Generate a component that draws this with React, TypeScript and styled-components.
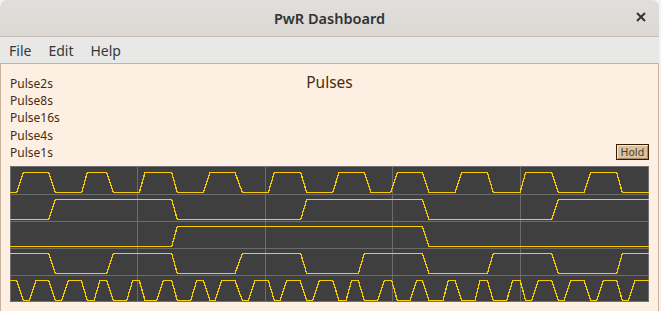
import React from 'react'
import styled, { createGlobalStyle } from 'styled-components'

const GlobalStyle = createGlobalStyle`
  html, body {
    margin: 0;
    padding: 0;
    background: #f4f3f2;
    font-family: "Noto Sans", "DejaVu Sans", sans-serif;
  }
`

const Window = styled.div`
  width: 659px;
  height: 311px;
  display: flex;
  flex-direction: column;
  overflow: hidden;
`

const TitleBar = styled.div`
  height: 36px;
  flex: none;
  display: flex;
  align-items: center;
  justify-content: center;
  position: relative;
  background: linear-gradient(#e1dedb, #dcd8d4);
  border-bottom: 1px solid #c4bdb5;
  border-top-left-radius: 7px;
  border-top-right-radius: 7px;
  color: #2e3436;
  font-size: 14.5px;
  font-weight: 600;
`

const CloseButton = styled.span`
  position: absolute;
  right: 10px;
  top: 9px;
  width: 16px;
  height: 16px;
  display: flex;
  align-items: center;
  justify-content: center;
`

const MenuBar = styled.div`
  height: 26px;
  flex: none;
  display: flex;
  align-items: center;
  gap: 17px;
  padding-left: 9px;
  background: #e8e8e7;
  font-size: 14px;
  color: #33383a;
`

const MenuItem = styled.span``

const Content = styled.div`
  flex: 1;
  display: flex;
  flex-direction: column;
  gap: 5px;
  background: #fdf0e3;
  border-top: 1px solid #c8b29c;
  border-left: 1px solid #c8b29c;
  border-right: 1px solid #c8b29c;
  padding: 11px 9px 0 9px;
`

const Header = styled.div`
  display: grid;
  grid-template-columns: 1fr auto 1fr;
  align-items: start;
`

const Labels = styled.div`
  display: flex;
  flex-direction: column;
`

const Label = styled.div`
  font-size: 12px;
  line-height: 17.2px;
  color: #4a2a14;
`

const Title = styled.div`
  font-size: 15.5px;
  line-height: 14px;
  color: #4a2a14;
`

const HoldCell = styled.div`
  display: flex;
  justify-content: flex-end;
  align-self: end;
  padding-bottom: 1px;
`

const HoldButton = styled.button`
  width: 33px;
  height: 16px;
  padding: 0;
  margin: 0;
  border: 1px solid #3e1a00;
  background: #d6c5a3;
  box-shadow: inset 1px 1px 0 #f2e8d2, inset -1px -1px 0 #a48c6a;
  font-family: "DejaVu Sans", sans-serif;
  font-size: 10.5px;
  color: #5a3a20;
  line-height: 12px;
`

const Chart = styled.svg`
  display: block;
  flex: none;
`

const LEFT = 10
const RIGHT = 648.5
const TOP = 166
const ROW = 27

type Signal = { name: string; high: boolean; edges: number[][] }

const signals: Signal[] = [
  {
    name: 'Pulse2s',
    high: false,
    edges: [[16.7, 23.3], [48.7, 55.3], [81.7, 87.3], [106.7, 113.3], [139.3, 145], [171.7, 177.3], [203.3, 210], [235, 242.3], [268.3, 274.3], [300.7, 306.7], [332.7, 339], [364.3, 371], [390.7, 397.3], [422.3, 429], [455, 461.7], [487.3, 493.3], [520, 525.7], [551.7, 558.3], [584, 590.7], [616.7, 622.3]],
  },
  {
    name: 'Pulse8s',
    high: false,
    edges: [[48.7, 55.3], [171.7, 177.3], [300.7, 306.7], [422.3, 429], [551.7, 558.3]],
  },
  {
    name: 'Pulse16s',
    high: false,
    edges: [[171.7, 177.3], [422.3, 429]],
  },
  {
    name: 'Pulse4s',
    high: true,
    edges: [[48.7, 55.3], [106.7, 113.3], [171.7, 177.3], [235, 242.3], [300.7, 306.7], [358.3, 364.3], [422.3, 429], [487.3, 493.3], [551.7, 558.3], [616.7, 622.3]],
  },
  {
    name: 'Pulse1s',
    high: true,
    edges: [[16.7, 23.3], [29.3, 36], [48.7, 55.3], [61.7, 68.3], [81.3, 87.3], [94, 100], [106.7, 113.3], [126.7, 132.7], [139.3, 145], [156.7, 163.3], [171.7, 177.3], [190.7, 196.7], [203.3, 210], [215, 221.7], [235, 242.3], [248.3, 255], [268.3, 274.3], [280, 286.7], [300, 306.7], [312.7, 319.3], [332.7, 339], [346, 351.7], [358.3, 364.3], [377.7, 384.3], [391.7, 397.3], [410, 416.7], [422.3, 429], [443, 448.3], [455, 461.7], [475, 480], [487.3, 493.3], [506.7, 512.7], [520, 525.7], [531.7, 538.3], [551.7, 558.3], [564, 570.7], [584, 590.7], [596.7, 603.3], [616.7, 622.3], [628.3, 635]],
  },
]

const tracePoints = (s: Signal, row: number) => {
  const top = TOP + row * ROW
  const hi = top + 6.5
  const lo = top + 26.5
  let level = s.high
  const pts: string[] = [`${LEFT},${level ? hi : lo}`]
  s.edges.forEach(([a, b]) => {
    pts.push(`${a},${level ? hi : lo}`)
    level = !level
    pts.push(`${b},${level ? hi : lo}`)
  })
  pts.push(`${RIGHT},${level ? hi : lo}`)
  return pts.join(' ')
}

const gridX = [137.5, 265.5, 392.5, 520.5]

const PulseChart: React.FC = () => (
  <Chart width={640} height={136} viewBox="10 166 640 136">
    <rect x={10} y={166} width={639} height={136} fill="#3f3f3f" />
    {gridX.map(x => (
      <line key={x} x1={x} y1={166} x2={x} y2={301} stroke="#6c6c6c" strokeWidth={1} />
    ))}
    {[1, 2, 3, 4].map(i => (
      <line key={i} x1={10} y1={TOP + i * ROW + 1.5} x2={649} y2={TOP + i * ROW + 1.5} stroke="#6c6c6c" strokeWidth={1} />
    ))}
    <rect x={10.5} y={166.5} width={638} height={135} fill="none" stroke="#707070" strokeWidth={1} />
    {signals.map((s, i) => (
      <polyline
        key={s.name}
        points={tracePoints(s, i)}
        fill="none"
        stroke="#f9cb00"
        strokeWidth={1.3}
        shapeRendering="crispEdges"
      />
    ))}
  </Chart>
)

const App: React.FC = () => (
  <>
    <GlobalStyle />
    <Window>
      <TitleBar>
        PwR Dashboard
        <CloseButton>
          <svg width="12" height="12" viewBox="0 0 12 12">
            <path d="M2 2 L10 10 M10 2 L2 10" stroke="#2e3436" strokeWidth="2" />
          </svg>
        </CloseButton>
      </TitleBar>
      <MenuBar>
        <MenuItem>File</MenuItem>
        <MenuItem>Edit</MenuItem>
        <MenuItem>Help</MenuItem>
      </MenuBar>
      <Content>
        <Header>
          <Labels>
            {signals.map(s => (
              <Label key={s.name}>{s.name}</Label>
            ))}
          </Labels>
          <Title>Pulses</Title>
          <HoldCell>
            <HoldButton>Hold</HoldButton>
          </HoldCell>
        </Header>
        <PulseChart />
      </Content>
    </Window>
  </>
)

export default App
